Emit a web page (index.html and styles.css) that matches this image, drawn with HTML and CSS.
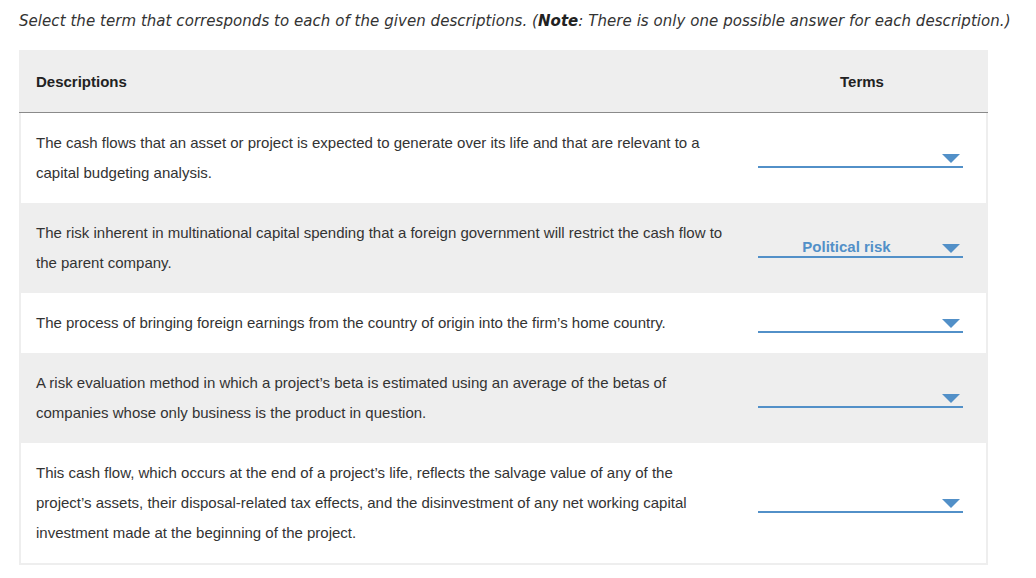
FILE: index.html
```html
<!DOCTYPE html>
<html>
<head>
<meta charset="utf-8">
<link rel="stylesheet" href="styles.css">
</head>
<body>
<p class="prompt">Select the term that corresponds to each of the given descriptions. (<b>Note</b>: There is only one possible answer for each description.)</p>
<div class="matching">
  <div class="head">
    <div class="col-desc">Descriptions</div>
    <div class="col-term">Terms</div>
  </div>
  <div class="row">
    <div class="col-desc">The cash flows that an asset or project is expected to generate over its life and that are relevant to a capital budgeting analysis.</div>
    <div class="col-term"><div class="select"><span class="value"></span><span class="caret"></span></div></div>
  </div>
  <div class="row alt">
    <div class="col-desc">The risk inherent in multinational capital spending that a foreign government will restrict the cash flow to the parent company.</div>
    <div class="col-term"><div class="select"><span class="value">Political risk</span><span class="caret"></span></div></div>
  </div>
  <div class="row">
    <div class="col-desc">The process of bringing foreign earnings from the country of origin into the firm’s home country.</div>
    <div class="col-term"><div class="select"><span class="value"></span><span class="caret"></span></div></div>
  </div>
  <div class="row alt">
    <div class="col-desc">A risk evaluation method in which a project’s beta is estimated using an average of the betas of companies whose only business is the product in question.</div>
    <div class="col-term"><div class="select"><span class="value"></span><span class="caret"></span></div></div>
  </div>
  <div class="row">
    <div class="col-desc">This cash flow, which occurs at the end of a project’s life, reflects the salvage value of any of the project’s assets, their disposal-related tax effects, and the disinvestment of any net working capital investment made at the beginning of the project.</div>
    <div class="col-term"><div class="select"><span class="value"></span><span class="caret"></span></div></div>
  </div>
</div>
</body>
</html>
```

FILE: styles.css
```css
html, body {
  margin: 0;
  padding: 0;
  background: #fff;
}
body {
  padding: 12px 0 0 19px;
  font-family: "Liberation Sans", Arial, sans-serif;
  color: #333;
}
.prompt {
  margin: 0;
  font-family: "DejaVu Sans", Verdana, sans-serif;
  font-style: italic;
  font-size: 15px;
  line-height: 18px;
  letter-spacing: 0.05px;
  color: #333;
  white-space: nowrap;
}
.prompt b {
  font-weight: bold;
  color: #222;
}
.matching {
  margin-top: 20px;
  width: 965px;
  border: 2px solid #eee;
  border-top: 0;
}
.head {
  display: flex;
  align-items: center;
  height: 62px;
  background: #eee;
  border-bottom: 1px solid #8a8a8a;
  margin: 0 -2px;
  padding: 0 2px;
  font-weight: bold;
  font-size: 15px;
  color: #222;
}
.col-desc {
  width: 721px;
  box-sizing: border-box;
  padding: 0 15px;
}
.col-term {
  width: 244px;
  box-sizing: border-box;
  padding-left: 16px;
}
.head .col-term {
  text-align: center;
  padding: 0 4px 0 0;
}
.row {
  display: flex;
  align-items: center;
  padding: 15px 0;
  font-size: 15px;
  line-height: 30px;
  background: #fff;
}
.row.alt {
  background: #eee;
}
.select {
  width: 205px;
  height: 18px;
  border-bottom: 2px solid #5290c8;
  display: flex;
  align-items: center;
  position: relative;
}
.value {
  flex: 1;
  text-align: center;
  font-weight: bold;
  font-size: 15px;
  line-height: 18px;
  color: #5290c8;
  padding-right: 28px;
}
.caret {
  position: absolute;
  right: 3px;
  top: 6px;
  width: 0;
  height: 0;
  border-left: 9px solid transparent;
  border-right: 9px solid transparent;
  border-top: 9px solid #5290c8;
}
```
